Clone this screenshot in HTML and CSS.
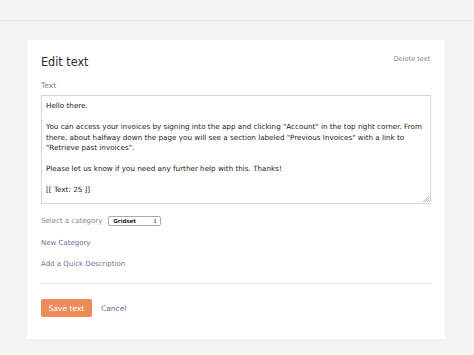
FILE: index.html
```html
<!DOCTYPE html>
<html>
<head>
<meta charset="utf-8">
<link rel="stylesheet" href="styles.css">
</head>
<body>
<div class="topbar"></div>
<div class="page">
  <div class="card">
    <div class="head">
      <h1 class="title">Edit text</h1>
      <a class="delete">Delete text</a>
    </div>
    <div class="label">Text</div>
    <div class="textarea">
      <p>Hello there.</p>
      <p>You can access your invoices by signing into the app and clicking "Account" in the top right corner. From there, about halfway down the page you will see a section labeled "Previous Invoices" with a link to "Retrieve past invoices".</p>
      <p>Please let us know if you need any further help with this. Thanks!</p>
      <p>[[ Text: 25 ]]</p>
      <svg class="grip" width="6" height="6" viewBox="0 0 6 6"><path d="M6 0L0 6M6 2L2 6M6 4L4 6" stroke="#999" stroke-width="0.7"/></svg>
    </div>
    <div class="row">
      <span class="muted">Select a category</span>
      <span class="select"><span>Gridset</span><span class="arrows">&#x2195;</span></span>
    </div>
    <a class="link">New Category</a>
    <a class="link">Add a Quick Description</a>
    <div class="rule"></div>
    <div class="actions">
      <button class="save">Save text</button>
      <a class="cancel">Cancel</a>
    </div>
  </div>
</div>
</body>
</html>
```

FILE: styles.css
```css
html, body { margin: 0; padding: 0; }
body {
  background: #f3f3f1;
  font-family: "DejaVu Sans", sans-serif;
  width: 474px;
  height: 355px;
  overflow: hidden;
}
.topbar {
  height: 20px;
  border-bottom: 1px solid #e9e9e7;
  background: #f4f4f2;
}
.page {
  padding: 19px 29px 0 27px;
}
.card {
  background: #fff;
  height: 299px;
  box-sizing: border-box;
  padding: 14px 14px 0 14px;
  display: flex;
  flex-direction: column;
}
.head {
  display: flex;
  justify-content: space-between;
  align-items: flex-start;
  height: 27px;
}
.title {
  margin: 0;
  font-family: "DejaVu Sans Condensed", "DejaVu Sans", sans-serif;
  font-size: 12.5px;
  font-weight: normal;
  color: #2b2b2b;
  line-height: 16px;
}
.delete {
  font-size: 6.5px;
  color: #7a7a9a;
  margin-top: 1px;
  margin-right: 1px;
}
.label {
  font-size: 7.5px;
  color: #888;
  line-height: 10px;
  height: 14px;
}
.textarea {
  position: relative;
  height: 109px;
  border: 1px solid #d6d6d6;
  box-sizing: border-box;
  padding: 5px 8px 0 4px;
  font-size: 7.2px;
  line-height: 10.5px;
  color: #222;
}
.textarea p { margin: 0 0 10.5px 0; }
.grip { position: absolute; right: 1px; bottom: 1px; }
.row {
  display: flex;
  align-items: center;
  margin-top: 11px;
  height: 12px;
  gap: 6px;
}
.muted { font-size: 7px; color: #888; }
.select {
  display: inline-flex;
  justify-content: space-between;
  align-items: center;
  width: 53px;
  height: 10px;
  box-sizing: border-box;
  border: 1px solid #aaa;
  border-radius: 2px;
  font-size: 5.5px;
  font-weight: bold;
  color: #222;
  padding: 0 3px 0 4px;
}
.arrows { font-size: 5px; font-weight: normal; }
.link {
  font-size: 7px;
  color: #6e7095;
  margin-top: 11px;
  line-height: 10px;
}
.rule {
  height: 0;
  border-top: 1px solid #e6e6e6;
  margin-top: 14px;
}
.actions {
  display: flex;
  align-items: center;
  margin-top: 15px;
  gap: 9px;
}
.save {
  background: #ee8b5b;
  border: none;
  border-radius: 2px;
  color: #fff;
  font-family: inherit;
  font-size: 7.5px;
  width: 51px;
  height: 18px;
  padding: 0;
}
.cancel { font-size: 7.5px; color: #6e7095; }
```
